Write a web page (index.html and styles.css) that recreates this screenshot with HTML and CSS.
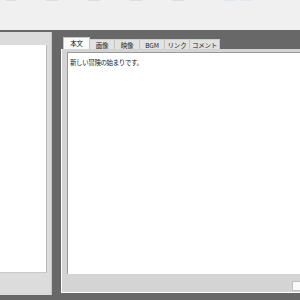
FILE: index.html
```html
<!DOCTYPE html>
<html lang="ja">
<head>
<meta charset="utf-8">
<link rel="stylesheet" href="styles.css">
</head>
<body>
<div class="topbar">
  <div class="marks">
    <span class="mark m1"></span><span class="mark m2"></span><span class="mark m3"></span><span class="mark m4"></span><span class="mark m5"></span><span class="mark blue"></span><span class="mark blue b2"></span>
  </div>
</div>
<div class="workspace">
  <div class="left">
    <div class="left-head"></div>
    <div class="left-body"></div>
    <div class="left-foot"></div>
  </div>
  <div class="right">
    <div class="tabs">
      <div class="tab active">本文</div>
      <div class="tab">画像</div>
      <div class="tab">映像</div>
      <div class="tab">BGM</div>
      <div class="tab">リンク</div>
      <div class="tab">コメント</div>
    </div>
    <div class="frame">
      <div class="content">新しい冒険の始まりです。</div>
      <div class="foot"><span class="btn"></span></div>
    </div>
  </div>
</div>
</body>
</html>
```
FILE: styles.css
```css
html, body {
  margin: 0;
  padding: 0;
}
body {
  width: 300px;
  height: 300px;
  overflow: hidden;
  background: #f0f0f0;
  font-family: "Noto Sans CJK JP", "Noto Sans", sans-serif;
  color: #202020;
}
.topbar {
  height: 30px;
  background: #f0f0f0;
}
.marks {
  display: flex;
  height: 2px;
}
.mark {
  display: block;
  height: 1px;
  width: 12px;
  background: #dedede;
  margin-left: 30px;
}
.mark.m1 { margin-left: 6px; width: 10px; }
.mark.blue {
  margin-left: 40px;
  width: 12px;
  background: #dde6ef;
}
.mark.b2 { margin-left: 5px; width: 10px; }
.workspace {
  height: 270px;
  background: #686868;
  display: flex;
}
.left {
  width: 52px;
  margin-top: 2px;
  height: 263px;
  background: #dcdcdc;
  border-right: 1px solid #c4c4c4;
  box-sizing: border-box;
  display: flex;
  flex-direction: column;
}
.left-head {
  height: 13px;
}
.left-body {
  width: 47px;
  height: 228px;
  background: #ffffff;
  border-right: 1px solid #b8b8b8;
  border-bottom: 1px solid #c8c8c8;
  box-sizing: border-box;
}
.right {
  flex: 1;
  margin-left: 8px;
  display: flex;
  flex-direction: column;
}
.tabs {
  display: flex;
  align-items: flex-end;
  height: 12px;
  margin-top: 7px;
  padding-left: 3px;
}
.tab {
  height: 10px;
  line-height: 10px;
  font-size: 6.5px;
  background: #e2e2e2;
  border-right: 1px solid #c4c4c4;
  border-top: 1px solid #d0d0d0;
  box-sizing: border-box;
  text-align: center;
  letter-spacing: -0.2px;
  color: #202020;
}
.tab:nth-child(2) { width: 25px; }
.tab:nth-child(3) { width: 25px; }
.tab:nth-child(4) { width: 25px; }
.tab:nth-child(5) { width: 25px; }
.tab:nth-child(6) { width: 30px; }
.tab.active {
  width: 27px;
  height: 12px;
  line-height: 11px;
  background: #fafafa;
  border-left: 1px solid #c4c4c4;
  border-top: 1px solid #c4c4c4;
  color: #101010;
}
.frame {
  height: 244px;
  background: #d4d4d4;
  border-left: 1px solid #ffffff;
  border-bottom: 1px solid #ffffff;
  box-sizing: border-box;
  margin-left: 1px;
  padding: 3px 0 0 5px;
  display: flex;
  flex-direction: column;
}
.content {
  height: 222px;
  background: #ffffff;
  border-left: 1px solid #9a9a9a;
  border-top: 1px solid #9a9a9a;
  box-sizing: border-box;
  font-size: 6.5px;
  letter-spacing: -0.4px;
  line-height: 10px;
  padding: 4px 0 0 2px;
  color: #1a1a1a;
}
.foot {
  flex: 1;
  display: flex;
  justify-content: flex-end;
  align-items: flex-end;
  padding-bottom: 1px;
}
.btn {
  display: block;
  width: 8px;
  height: 10px;
  background: #fafafa;
  border: 1px solid #c0c0c0;
  border-right: none;
  box-sizing: border-box;
}
```
